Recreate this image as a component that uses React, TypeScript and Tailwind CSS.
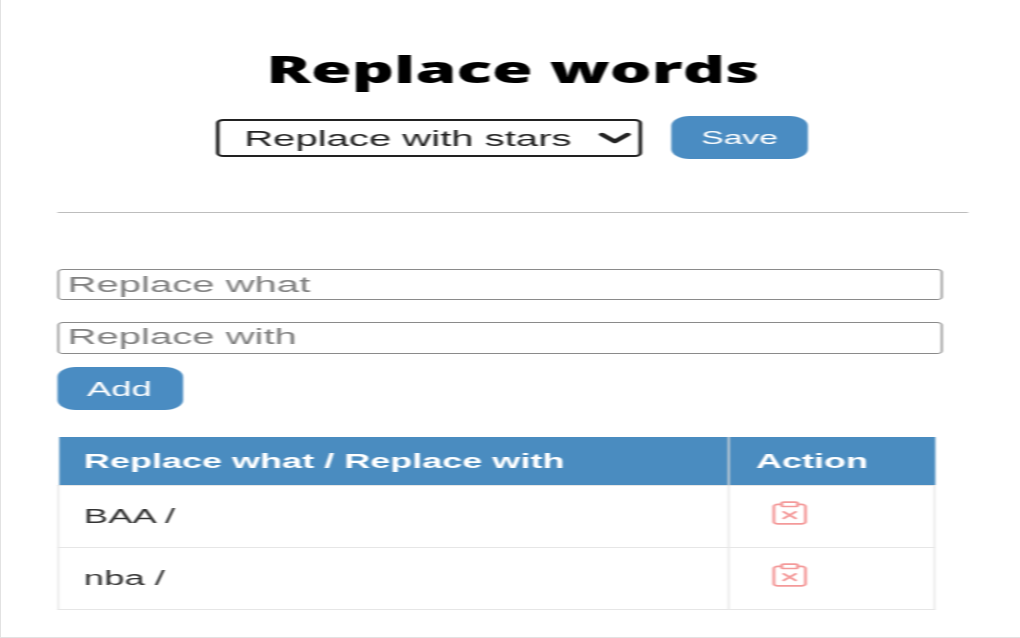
import { ChevronDown, ClipboardX } from "lucide-react"

const rows = ["BAA /", "nba /"]

export default function App() {
  return (
    <div className="w-[1020px] h-[638px] overflow-hidden bg-white border-b border-l border-[#e2e2e2]">
      {/* the reference is a popup stretched sideways, so the whole page is scaled */}
      <div
        className="w-[560px] h-[637px] origin-top-left scale-x-[1.8214] blur-[0.6px] text-[#333]"
        style={{ fontFamily: '"Liberation Sans", Arial, sans-serif' }}
      >
        <h1
          className="pt-[45px] pl-[2px] h-[116px] text-center text-[36.2px] leading-[48px] font-extrabold text-black"
          style={{ fontFamily: '"Open Sans", sans-serif' }}
        >
          Replace words
        </h1>

        <div className="flex items-center ml-[118px] gap-[16px]">
          <div className="relative w-[234px] h-[38px]">
            <select className="w-full h-full pl-[13.5px] pt-[1px] appearance-none border-2 border-[#222] rounded bg-white text-[22px] text-[#222]">
              <option>Replace with stars</option>
            </select>
            <ChevronDown size={28} strokeWidth={3} className="absolute right-[1px] top-[5px] text-[#222]" />
          </div>
          <button className="w-[75px] h-[43px] pt-[1px] rounded-[10px] bg-[#4a8cc2] text-white text-[18.5px]">Save</button>
        </div>

        <hr className="ml-[31px] w-[500px] mt-[53px] border-t border-[#bdbdbd]" />

        <div className="ml-[30.5px] mt-[56px] flex flex-col">
          <input
            placeholder="Replace what"
            className="w-[486px] h-[31px] px-[5px] pb-[1px] border border-[#8a8a8a] rounded-[3px] text-[22px] placeholder:text-[#808080]"
          />
          <input
            placeholder="Replace with"
            className="w-[486px] h-[32px] mt-[22px] px-[5px] pb-[3px] border border-[#8a8a8a] rounded-[3px] text-[22px] placeholder:text-[#808080]"
          />
          <button className="w-[69px] h-[43px] mt-[13px] rounded-[10px] bg-[#4a8cc2] text-white text-[20px]">Add</button>
        </div>

        <table className="ml-[31px] mt-[27px] w-[482px] border-collapse table-fixed">
          <thead>
            <tr className="h-[48px] bg-[#4a8cc0] text-white text-[19.8px] font-bold text-left">
              <th className="w-[368px] pl-[14px] pt-[3px] font-bold border-r border-[#d5d5d5]">Replace what / Replace with</th>
              <th className="pl-[14.5px] pt-[3px] font-bold">Action</th>
            </tr>
          </thead>
          <tbody>
            {rows.map((row) => (
              <tr key={row} className="h-[62px] text-[20px]">
                <td className="pl-[13.5px] border border-[#e6e6e6]">{row}</td>
                <td className="pl-[20px] border border-[#e6e6e6]">
                  <ClipboardX size={26} strokeWidth={1.5} className="-translate-y-[3px] text-[#f49a9a]" />
                </td>
              </tr>
            ))}
          </tbody>
        </table>
      </div>
    </div>
  )
}
